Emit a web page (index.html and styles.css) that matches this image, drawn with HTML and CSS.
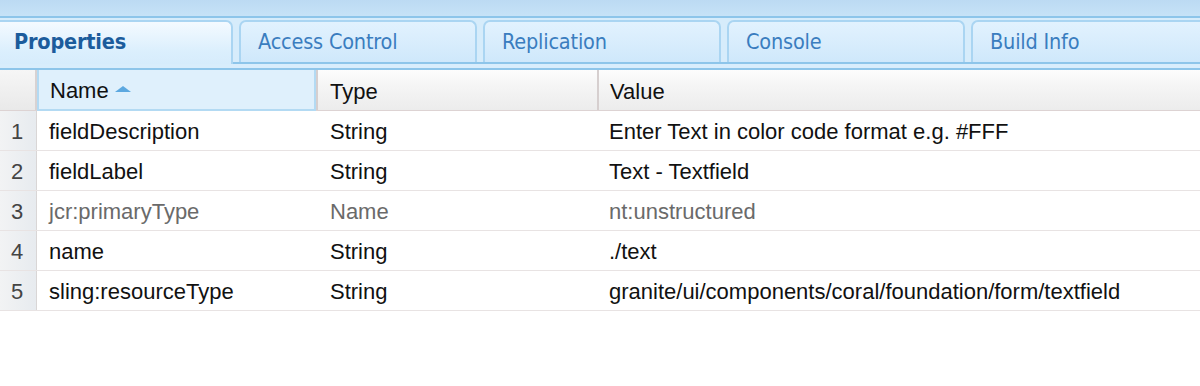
FILE: index.html
```html
<!DOCTYPE html>
<html>
<head>
<meta charset="utf-8">
<link rel="stylesheet" href="styles.css">
</head>
<body>
<div class="topbar"></div>
<div class="tabstrip">
  <div class="tabs">
    <div class="tab active">Properties</div>
    <div class="tab">Access Control</div>
    <div class="tab">Replication</div>
    <div class="tab">Console</div>
    <div class="tab last">Build Info</div>
  </div>
  <div class="tabbase"></div>
</div>
<div class="grid">
  <div class="row head">
    <div class="c num"></div>
    <div class="c name sorted"><span>Name</span><span class="arrow"></span></div>
    <div class="c type">Type</div>
    <div class="c value">Value</div>
  </div>
  <div class="row">
    <div class="c num">1</div>
    <div class="c name">fieldDescription</div>
    <div class="c type">String</div>
    <div class="c value">Enter Text in color code format e.g. #FFF</div>
  </div>
  <div class="row">
    <div class="c num">2</div>
    <div class="c name">fieldLabel</div>
    <div class="c type">String</div>
    <div class="c value">Text - Textfield</div>
  </div>
  <div class="row muted">
    <div class="c num">3</div>
    <div class="c name">jcr:primaryType</div>
    <div class="c type">Name</div>
    <div class="c value">nt:unstructured</div>
  </div>
  <div class="row">
    <div class="c num">4</div>
    <div class="c name">name</div>
    <div class="c type">String</div>
    <div class="c value">./text</div>
  </div>
  <div class="row">
    <div class="c num">5</div>
    <div class="c name">sling:resourceType</div>
    <div class="c type">String</div>
    <div class="c value">granite/ui/components/coral/foundation/form/textfield</div>
  </div>
</div>
</body>
</html>
```

FILE: styles.css
```css
html, body {
  margin: 0;
  padding: 0;
  background: #ffffff;
  width: 1200px;
  height: 386px;
  overflow: hidden;
}

.topbar {
  height: 16px;
  background: linear-gradient(#bcdaf3, #c6e2f7);
  border-bottom: 2px solid #8dc5ea;
}

.tabstrip {
  background: #d3eafb;
}

.tabs {
  display: flex;
  gap: 6px;
  padding-top: 2px;
  height: 42px;
  border-bottom: 2px solid #8dc5ea;
  background: #d6ecfb;
}

.tab {
  box-sizing: border-box;
  width: 238px;
  flex: none;
  height: 42px;
  border: 2px solid #aad5f2;
  border-bottom: none;
  border-radius: 7px 7px 0 0;
  background: linear-gradient(#e2f2fe, #cfe8fb);
  font-family: "DejaVu Sans Condensed", "DejaVu Sans", sans-serif;
  font-size: 21.5px;
  color: #3a7dbf;
  padding-left: 17px;
  line-height: 40px;
  letter-spacing: -0.2px;
}

.tab.active {
  width: 233px;
  height: 44px;
  margin-bottom: -2px;
  border-left: none;
  border-radius: 0 7px 0 0;
  background: linear-gradient(#f4faff, #dbeffd 70%, #d6ecfc);
  font-weight: bold;
  color: #1c5c9c;
  padding-left: 14px;
}

.tab.last {
  flex: 1;
  border-right: none;
  border-radius: 7px 0 0 0;
}

.tabbase {
  height: 4px;
  background: #d8edfc;
  border-bottom: 2px solid #8dc5ea;
}

.grid {
  font-family: "Liberation Sans", Arial, sans-serif;
  font-size: 22px;
  color: #111111;
}

.row {
  display: flex;
  height: 39px;
  border-bottom: 1px solid #e8e3e3;
}

.c {
  box-sizing: border-box;
  display: flex;
  align-items: center;
  white-space: nowrap;
  padding-top: 3px;
}

.num {
  width: 37px;
  justify-content: center;
  padding-right: 2px;
  color: #444444;
  background: linear-gradient(90deg, #f2f3f4, #e7ebef);
  border-right: 1px solid #d9d6d6;
}

.name {
  width: 279px;
  padding-left: 12px;
}

.type {
  width: 281px;
  padding-left: 14px;
}

.value {
  flex: 1;
  padding-left: 12px;
}

.row.head {
  height: 40px;
  border-bottom: 1px solid #ddd3d3;
  background: linear-gradient(#fdfdfd, #f5f5f5 40%, #ececec);
}

.head .num {
  background: linear-gradient(#f6f6f6, #e9e9e9);
  border-right: 2px solid #d8d2d2;
}

.head .name {
  padding-left: 11px;
}

.head .type {
  border-left: 2px solid #d6cfcf;
  padding-left: 12px;
}

.head .value {
  border-left: 2px solid #d6cfcf;
  padding-left: 11px;
}

.head .sorted {
  background: #dff0fc;
  border: 2px solid #b3daf3;
  border-top: none;
  margin-bottom: -1px;
  height: 41px;
}

.arrow {
  width: 0;
  height: 0;
  margin-left: 6px;
  margin-top: -4px;
  border-left: 8px solid transparent;
  border-right: 8px solid transparent;
  border-bottom: 6px solid #5ca8e0;
}

.muted .name,
.muted .type,
.muted .value {
  color: #6a6a6a;
}
```
